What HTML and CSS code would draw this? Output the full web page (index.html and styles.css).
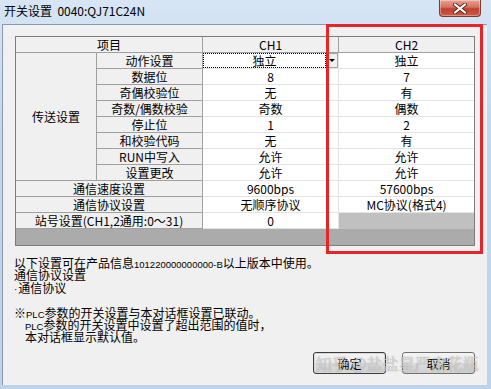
FILE: index.html
```html
<!DOCTYPE html>
<html lang="zh-CN">
<head>
<meta charset="utf-8">
<title>开关设置</title>
<link rel="stylesheet" href="styles.css">
</head>
<body>
<div class="window">
  <div class="titlebar">
    <span class="title">开关设置&nbsp;&nbsp;0040:QJ71C24N</span>
    <div class="close">
      <svg width="14" height="11" viewBox="0 0 14 11"><path d="M2 1.5 L12 9.5 M12 1.5 L2 9.5" stroke="#5a2a22" stroke-width="4" stroke-linecap="round"/><path d="M2 1.5 L12 9.5 M12 1.5 L2 9.5" stroke="#ffffff" stroke-width="2.2" stroke-linecap="round"/></svg>
    </div>
  </div>
  <div class="client">
    <div class="grid">
      <table class="tbl">
        <colgroup><col class="c-a"><col class="c-b"><col class="c-ch1"><col class="c-ch2"></colgroup>
        <tr><td class="hd" colspan="2">项目</td><td class="hd">CH1</td><td class="hd last">CH2</td></tr>
        <tr><td class="lbl" rowspan="8">传送设置</td><td class="lbl">动作设置</td>
          <td class="val combo-cell"><div class="combo"><span class="combo-text">独立</span><span class="combo-btn"><span class="arrow"></span></span></div></td><td class="val last">独立</td></tr>
        <tr><td class="lbl">数据位</td><td class="val">8</td><td class="val last">7</td></tr>
        <tr><td class="lbl">奇偶校验位</td><td class="val">无</td><td class="val last">有</td></tr>
        <tr><td class="lbl">奇数/偶数校验</td><td class="val">奇数</td><td class="val last">偶数</td></tr>
        <tr><td class="lbl">停止位</td><td class="val">1</td><td class="val last">2</td></tr>
        <tr><td class="lbl">和校验代码</td><td class="val">无</td><td class="val last">有</td></tr>
        <tr><td class="lbl">RUN中写入</td><td class="val">允许</td><td class="val last">允许</td></tr>
        <tr><td class="lbl">设置更改</td><td class="val">允许</td><td class="val last">允许</td></tr>
        <tr><td class="lbl" colspan="2">通信速度设置</td><td class="val">9600bps</td><td class="val last">57600bps</td></tr>
        <tr><td class="lbl" colspan="2">通信协议设置</td><td class="val">无顺序协议</td><td class="val last">MC协议(格式4)</td></tr>
        <tr><td class="lbl" colspan="2">站号设置(CH1,2通用:0～31)</td><td class="val">0</td><td class="val last disabled"></td></tr>
      </table>
      <div class="grid-empty"></div>
    </div>
    <div class="notes">
      <div class="line">以下设置可在产品信息<span class="lat">101220000000000-B</span>以上版本中使用。</div>
      <div class="line">通信协议设置</div>
      <div class="line"><span class="lat dot">·</span>通信协议</div>
      <div class="line blank"></div>
      <div class="line">※<span class="lat">PLC</span>参数的开关设置与本对话框设置已联动。</div>
      <div class="line ind"><span class="lat">PLC</span>参数的开关设置中设置了超出范围的值时，</div>
      <div class="line ind">本对话框显示默认值。</div>
    </div>
    <div class="buttons">
      <button class="btn default">确定</button>
      <button class="btn">取消</button>
    </div>
  </div>
  <div class="annot"></div>
  <div class="watermark">知乎 @盐盐星严肃花瓶</div>
</div>
</body>
</html>
```

FILE: styles.css
```css
* { box-sizing: border-box; }

body {
  margin: 0;
  width: 491px;
  height: 389px;
  overflow: hidden;
  font-family: "Noto Sans CJK SC", "Liberation Sans", sans-serif;
  font-size: 12px;
  color: #000;
}

.window {
  position: relative;
  width: 491px;
  height: 389px;
  background: linear-gradient(#d7e5f5, #c3d8ef 30%, #bcd3ec);
  padding: 0 4px 4px 2px;
  display: flex;
  flex-direction: column;
}

.titlebar {
  height: 24px;
  flex: none;
  position: relative;
  display: flex;
  align-items: center;
  padding-left: 2px;
}

.title {
  font-size: 12px;
  line-height: 14px;
  margin-top: -3px;
  color: #000;
}

.close {
  position: absolute;
  right: 6px;
  top: 0;
  width: 42px;
  height: 17px;
  border: 1px solid #7a3b33;
  border-top: none;
  border-radius: 0 0 4px 4px;
  background: linear-gradient(#e7a597, #d4705d 45%, #c0402b 55%, #cf5a44);
  display: flex;
  align-items: center;
  justify-content: center;
  box-shadow: inset 0 0 0 1px rgba(255,255,255,0.35);
}

.client {
  flex: 1;
  background: #f0f0f0;
  border-top: 1px solid #8a99ab;
  border-left: 1px solid #8a99ab;
  display: flex;
  flex-direction: column;
  padding: 11px 12px 11px 12px;
}

.grid {
  width: 460px;
  border: 1px solid #7d7d7d;
  background: #ababab;
  flex: none;
}

.tbl {
  width: 458px;
  table-layout: fixed;
  border-collapse: separate;
  border-spacing: 0;
  background: #fff;
}

.c-a { width: 81px; }
.c-b { width: 106px; }
.c-ch1 { width: 136px; }
.c-ch2 { width: 135px; }

.tbl td {
  padding: 0;
  height: 16px;
  line-height: 15px;
  text-align: center;
  white-space: nowrap;
  overflow: hidden;
  font-size: 12px;
}

.hd, .lbl {
  background: #f0f0f0;
  border-right: 1px solid #a0a0a0;
  border-bottom: 1px solid #a0a0a0;
}

.val {
  background: #fff;
  border-right: 1px solid #e3e3e3;
  border-bottom: 1px solid #e3e3e3;
}

.tbl td.last { border-right: none; }

.tbl td.disabled { background: #c0c0c0; border-bottom-color: #c0c0c0; }

.combo {
  display: flex;
  height: 15px;
}

.combo-text {
  flex: 1;
  border: 1px dotted #000;
  line-height: 13px;
}

.combo-btn {
  width: 12px;
  flex: none;
  background: #f0f0f0;
  border: 1px solid #a7a7a7;
  display: flex;
  align-items: center;
  justify-content: center;
}

.arrow {
  width: 0;
  height: 0;
  border-left: 3px solid transparent;
  border-right: 3px solid transparent;
  border-top: 3px solid #000;
}

.grid-empty {
  height: 16px;
  background: #ababab;
}

.notes {
  margin-top: 11px;
  font-size: 12px;
  margin-left: -1px;
}

.notes .line {
  height: 12.4px;
  line-height: 12.4px;
  white-space: nowrap;
}

.notes .ind { padding-left: 11px; }

.lat {
  font-family: "Liberation Sans", sans-serif;
  font-size: 9.5px;
}

.lat.dot {
  font-size: 10px;
  margin-right: 1px;
}

.buttons {
  margin-top: auto;
  display: flex;
  justify-content: flex-end;
  gap: 16px;
}

.btn {
  width: 73px;
  height: 22px;
  margin: 0;
  padding: 0;
  font-family: "Noto Sans CJK SC", sans-serif;
  font-size: 12px;
  color: #000;
  border: 1px solid #707070;
  border-radius: 3px;
  background: linear-gradient(#f4f4f4, #ebebeb 50%, #dddddd 51%, #d0d0d0);
}

.btn.default {
  border-color: #3c3c3c;
  box-shadow: inset 0 0 0 1px #d8d8d8;
}

.annot {
  position: absolute;
  left: 326px;
  top: 24px;
  width: 157px;
  height: 230px;
  border: 3px solid #e5252a;
  pointer-events: none;
}

.watermark {
  position: absolute;
  left: 316px;
  top: 352px;
  font-size: 16px;
  line-height: 22px;
  color: rgba(255,255,255,0.55);
  text-shadow: 0 0 1px rgba(80,80,80,0.6);
  white-space: nowrap;
  pointer-events: none;
}
```
